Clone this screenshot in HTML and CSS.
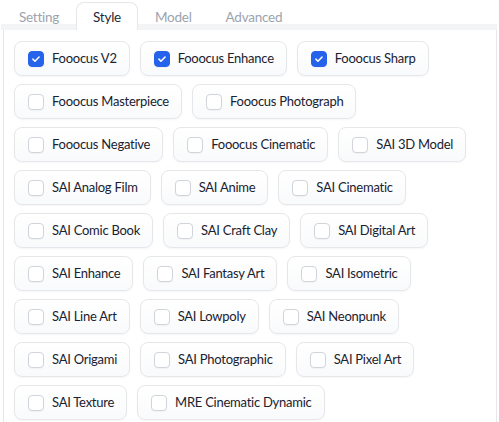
FILE: index.html
```html
<!DOCTYPE html>
<html>
<head>
<meta charset="utf-8">
<link rel="stylesheet" href="styles.css">
</head>
<body>
<div class="tabs">
  <div class="tab-nav">
    <button class="tab">Setting</button>
    <button class="tab selected">Style</button>
    <button class="tab">Model</button>
    <button class="tab">Advanced</button>
    <div class="tab-fill"></div>
  </div>
  <div class="panel">
    <div class="styles">
      <label class="item"><span class="box checked"><svg viewBox="0 0 16 16" width="16" height="16"><path d="M4.5 8.2l2.3 2.3 4.7-4.8" fill="none" stroke="#fff" stroke-width="1.8" stroke-linecap="round" stroke-linejoin="round"/></svg></span><span class="name">Fooocus V2</span></label>
      <label class="item"><span class="box checked"><svg viewBox="0 0 16 16" width="16" height="16"><path d="M4.5 8.2l2.3 2.3 4.7-4.8" fill="none" stroke="#fff" stroke-width="1.8" stroke-linecap="round" stroke-linejoin="round"/></svg></span><span class="name">Fooocus Enhance</span></label>
      <label class="item"><span class="box checked"><svg viewBox="0 0 16 16" width="16" height="16"><path d="M4.5 8.2l2.3 2.3 4.7-4.8" fill="none" stroke="#fff" stroke-width="1.8" stroke-linecap="round" stroke-linejoin="round"/></svg></span><span class="name">Fooocus Sharp</span></label>
      <label class="item"><span class="box"></span><span class="name">Fooocus Masterpiece</span></label>
      <label class="item"><span class="box"></span><span class="name">Fooocus Photograph</span></label>
      <label class="item"><span class="box"></span><span class="name">Fooocus Negative</span></label>
      <label class="item"><span class="box"></span><span class="name">Fooocus Cinematic</span></label>
      <label class="item"><span class="box"></span><span class="name">SAI 3D Model</span></label>
      <label class="item"><span class="box"></span><span class="name">SAI Analog Film</span></label>
      <label class="item"><span class="box"></span><span class="name">SAI Anime</span></label>
      <label class="item"><span class="box"></span><span class="name">SAI Cinematic</span></label>
      <label class="item"><span class="box"></span><span class="name">SAI Comic Book</span></label>
      <label class="item"><span class="box"></span><span class="name">SAI Craft Clay</span></label>
      <label class="item"><span class="box"></span><span class="name">SAI Digital Art</span></label>
      <label class="item"><span class="box"></span><span class="name">SAI Enhance</span></label>
      <label class="item"><span class="box"></span><span class="name">SAI Fantasy Art</span></label>
      <label class="item"><span class="box"></span><span class="name">SAI Isometric</span></label>
      <label class="item"><span class="box"></span><span class="name">SAI Line Art</span></label>
      <label class="item"><span class="box"></span><span class="name">SAI Lowpoly</span></label>
      <label class="item"><span class="box"></span><span class="name">SAI Neonpunk</span></label>
      <label class="item"><span class="box"></span><span class="name">SAI Origami</span></label>
      <label class="item"><span class="box"></span><span class="name">SAI Photographic</span></label>
      <label class="item"><span class="box"></span><span class="name">SAI Pixel Art</span></label>
      <label class="item"><span class="box"></span><span class="name">SAI Texture</span></label>
      <label class="item"><span class="box"></span><span class="name">MRE Cinematic Dynamic</span></label>
    </div>
  </div>
</div>
</body>
</html>
```

FILE: styles.css
```css
html, body {
  margin: 0;
  padding: 0;
  background: #ffffff;
  overflow: hidden;
}
body {
  font-family: Lato, "Noto Sans", sans-serif;
  font-size: 13px;
  letter-spacing: -0.25px;
  color: #1f2937;
}
.tabs {
  padding: 0 2px 0 3px;
}
.tab-nav {
  display: flex;
  height: 30px;
  margin-left: -2px;
  align-items: stretch;
  background: linear-gradient(to bottom, #ffffff 0, #ffffff 24px, #f3f4f6 24px, #f3f4f6 30px);
}
.tab {
  font: inherit;
  letter-spacing: inherit;
  font-size: 13.5px;
  color: #9ca3af;
  background: transparent;
  border: 1px solid transparent;
  border-bottom: none;
  padding: 2px 16px 0 16px;
  margin-top: 2px;
  height: 28px;
  line-height: 24px;
  display: flex;
  align-items: flex-start;
  cursor: pointer;
}
.tab:first-child {
  padding-left: 17px;
}
.tab.selected {
  color: #1f2937;
  background: #ffffff;
  border-color: #e5e7eb;
  border-radius: 8px 8px 0 0;
}
.tab-fill {
  flex: 1;
}
.panel {
  border: 1px solid #e5e7eb;
  border-top: none;
  background: #ffffff;
  padding: 11px 10px 10px 10px;
  min-height: 400px;
}
.styles {
  display: flex;
  flex-wrap: wrap;
  gap: 8px 10px;
}
.item {
  display: flex;
  align-items: center;
  height: 35px;
  box-sizing: border-box;
  padding: 0 12px 0 13px;
  border: 1px solid #e5e7eb;
  border-radius: 8px;
  background: linear-gradient(to top, #f9fafb, #ffffff);
  box-shadow: 0 1px 2px rgba(0, 0, 0, 0.04);
  cursor: pointer;
}
.box {
  width: 16px;
  height: 16px;
  box-sizing: border-box;
  border: 1px solid #d1d5db;
  border-radius: 4px;
  background: #ffffff;
  margin-right: 8px;
  flex: none;
  display: flex;
  align-items: center;
  justify-content: center;
  box-shadow: 0 1px 1px rgba(0, 0, 0, 0.04);
}
.box.checked {
  background: #2563eb;
  border-color: #2563eb;
}
.box svg {
  display: block;
}
.name {
  white-space: nowrap;
  line-height: 17px;
  color: #1a2230;
}
```
